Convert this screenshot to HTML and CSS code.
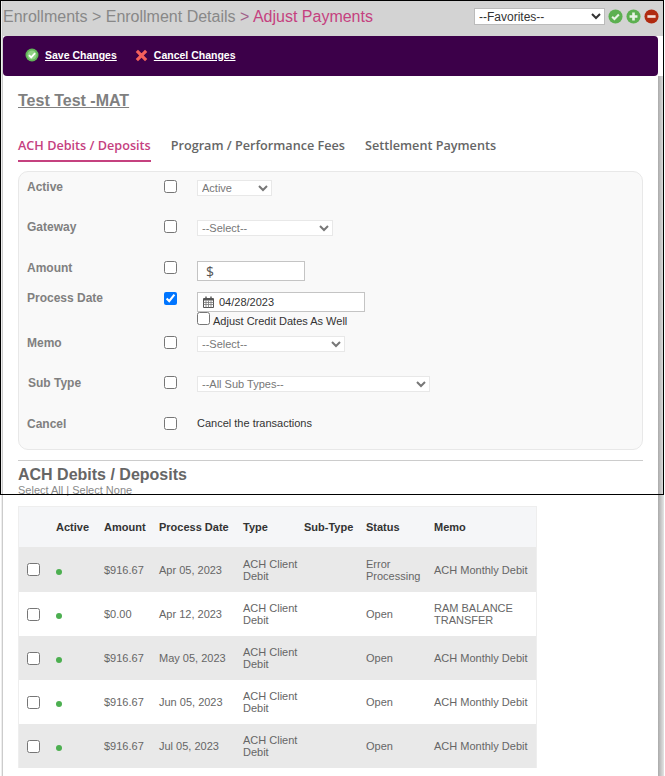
FILE: index.html
```html
<!DOCTYPE html>
<html lang="en">
<head>
<meta charset="utf-8">
<title>Adjust Payments</title>
<link rel="stylesheet" href="styles.css">
</head>
<body>
<div class="page">
  <header class="topbar">
    <div class="crumbs">Enrollments &gt; Enrollment Details <span class="crumb-current"><span class="sep">&gt;</span> Adjust Payments</span></div>
    <div class="favorites">
      <select class="fav-select"><option>--Favorites--</option></select>
      <svg class="fav-icon" viewBox="0 0 16 16"><circle cx="8" cy="8" r="7.5" fill="#5cb050"/><path d="M4.4 8.2l2.5 2.5 4.7-4.9" fill="none" stroke="#e8f3e4" stroke-width="2.2"/></svg>
      <svg class="fav-icon" viewBox="0 0 16 16"><circle cx="8" cy="8" r="7.5" fill="#5cb050"/><path d="M8 3.8v8.4M3.8 8h8.4" fill="none" stroke="#e8f3e4" stroke-width="2.8"/></svg>
      <svg class="fav-icon" viewBox="0 0 16 16"><circle cx="8" cy="8" r="7.5" fill="#b02a10"/><path d="M3.6 8h8.8" fill="none" stroke="#f3e0da" stroke-width="2.8"/></svg>
    </div>
  </header>

  <div class="shell">
    <nav class="toolbar">
      <a class="tool-link" href="#">
        <svg class="tool-icon" viewBox="0 0 14 14"><circle cx="7" cy="7" r="6.5" fill="#62b558"/><circle cx="7" cy="7" r="4.6" fill="#8fd084"/><path d="M4 7.2l2.2 2.2 3.9-4.2" fill="none" stroke="#fff" stroke-width="1.8"/></svg>
        Save Changes
      </a>
      <a class="tool-link tool-cancel" href="#">
        <svg class="tool-icon" viewBox="0 0 14 14"><path d="M2 2l10 10M12 2L2 12" fill="none" stroke="#f4605c" stroke-width="3.4"/></svg>
        Cancel Changes
      </a>
    </nav>

    <main class="content">
      <h1 class="client"><a href="#">Test Test -MAT</a></h1>

      <div class="tabs">
        <a class="tab tab-active" href="#">ACH Debits / Deposits</a>
        <a class="tab" href="#">Program / Performance Fees</a>
        <a class="tab" href="#">Settlement Payments</a>
      </div>

      <form class="panel">
        <div class="row row-active">
          <label class="row-label">Active</label>
          <input type="checkbox">
          <select class="ctl w-active"><option>Active</option></select>
        </div>
        <div class="row row-gateway">
          <label class="row-label">Gateway</label>
          <input type="checkbox">
          <select class="ctl w-gateway"><option>--Select--</option></select>
        </div>
        <div class="row row-amount">
          <label class="row-label">Amount</label>
          <input type="checkbox">
          <div class="field w-amount"><span class="dollar">$</span></div>
        </div>
        <div class="row row-date">
          <label class="row-label label-date">Process Date</label>
          <input type="checkbox" checked>
          <div class="date-stack">
            <div class="field w-date">
              <svg class="cal" viewBox="0 0 11 12"><path d="M0.5 2.5h10v9h-10z" fill="#fff" stroke="#555"/><path d="M0.5 3h10v1.5h-10z" fill="#555"/><path d="M3 0.5v2M8 0.5v2" stroke="#555" stroke-width="1.4"/><path d="M0.5 6.5h10M0.5 8.5h10M3 4.5v7M5.5 4.5v7M8 4.5v7" stroke="#777" stroke-width="0.8"/></svg>
              <span class="date-value">04/28/2023</span>
            </div>
            <label class="adjust"><input type="checkbox"><span class="adjust-text">Adjust Credit Dates As Well</span></label>
          </div>
        </div>
        <div class="row row-memo">
          <label class="row-label">Memo</label>
          <input type="checkbox">
          <select class="ctl w-memo"><option>--Select--</option></select>
        </div>
        <div class="row row-sub">
          <label class="row-label label-sub">Sub Type</label>
          <input type="checkbox">
          <select class="ctl w-sub"><option>--All Sub Types--</option></select>
        </div>
        <div class="row row-cancel">
          <label class="row-label">Cancel</label>
          <input type="checkbox">
          <span class="cancel-text">Cancel the transactions</span>
        </div>
      </form>

      <hr class="rule">
      <h2 class="section-title">ACH Debits / Deposits</h2>
      <div class="select-links">Select All | Select None</div>

      <table class="grid">
        <colgroup>
          <col class="c-check"><col class="c-active"><col class="c-amount"><col class="c-date"><col class="c-type"><col class="c-sub"><col class="c-status"><col class="c-memo">
        </colgroup>
        <thead>
          <tr><th></th><th>Active</th><th>Amount</th><th>Process Date</th><th>Type</th><th>Sub-Type</th><th>Status</th><th>Memo</th></tr>
        </thead>
        <tbody>
          <tr><td><input type="checkbox"></td><td><span class="dot"></span></td><td>$916.67</td><td>Apr 05, 2023</td><td>ACH Client Debit</td><td></td><td>Error Processing</td><td>ACH Monthly Debit</td></tr>
          <tr><td><input type="checkbox"></td><td><span class="dot"></span></td><td>$0.00</td><td>Apr 12, 2023</td><td>ACH Client Debit</td><td></td><td>Open</td><td>RAM BALANCE TRANSFER</td></tr>
          <tr><td><input type="checkbox"></td><td><span class="dot"></span></td><td>$916.67</td><td>May 05, 2023</td><td>ACH Client Debit</td><td></td><td>Open</td><td>ACH Monthly Debit</td></tr>
          <tr><td><input type="checkbox"></td><td><span class="dot"></span></td><td>$916.67</td><td>Jun 05, 2023</td><td>ACH Client Debit</td><td></td><td>Open</td><td>ACH Monthly Debit</td></tr>
          <tr><td><input type="checkbox"></td><td><span class="dot"></span></td><td>$916.67</td><td>Jul 05, 2023</td><td>ACH Client Debit</td><td></td><td>Open</td><td>ACH Monthly Debit</td></tr>
        </tbody>
      </table>
    </main>
  </div>

  <div class="rail rail-left"></div>
  <div class="rail rail-right"></div>
  <div class="frame"></div>
</div>
</body>
</html>
```
FILE: styles.css
```css
* { box-sizing: border-box; }
html, body { margin: 0; padding: 0; background: #fff; }
body { font-family: "Liberation Sans", Arial, sans-serif; color: #666; }

.page { position: relative; width: 665px; height: 776px; overflow: hidden; }

/* top bar */
.topbar {
  display: flex; align-items: center; justify-content: space-between;
  height: 36px; margin-right: 1px; padding: 0 5px 3px 3px; background: #d3d3d3;
}
.crumbs { font-size: 16px; color: #888; white-space: nowrap; }
.crumb-current { color: #c5417f; }
.sep { color: #a0608a; }
.favorites { display: flex; align-items: center; gap: 3px; }
.fav-select {
  width: 131px; height: 17px; padding: 0;
  font: 12px "Liberation Sans", Arial, sans-serif; color: #333;
  background: #fff; border: 1px solid #bbb; border-radius: 0;
}
.fav-icon { width: 15px; height: 15px; }

/* shell */
.shell { padding: 0 7px 0 3px; }
.toolbar {
  display: flex; align-items: center; gap: 18px;
  height: 40px; padding: 0 0 2px 22px; background: #3c0049; border-radius: 4px;
}
.tool-link {
  display: flex; align-items: center; gap: 6px;
  font-size: 10.5px; font-weight: bold; color: #fff; text-decoration: underline;
}
.tool-icon { width: 14px; height: 14px; }
.tool-cancel .tool-icon { width: 13px; height: 13px; }
.content { padding: 0 15px 0 15px; }

.client { margin: 0; height: 52px; padding-top: 15px; font-size: 16px; line-height: 20px; font-weight: bold; }
.client a { color: #808080; }

.tabs { display: flex; gap: 20px; height: 43px; padding-top: 9px; }
.tab {
  height: 25px; font: 600 12.65px/17px "Open Sans", sans-serif; color: #666; text-decoration: none;
}
.tab-active { color: #c5417f; border-bottom: 2px solid #c5417f; }

/* filter panel */
.panel {
  height: 279px;
  background: #f9f9f9; border: 1px solid #e8e8e8; border-radius: 10px;
}
.row {
  display: grid; grid-template-columns: 145px 33px 1fr; align-items: start;
  font-size: 12px; padding-top: 8px;
}
.row input[type="checkbox"] { margin: 0; width: 13px; height: 13px; }
.row-label { padding-left: 8px; font-weight: bold; color: #808080; line-height: 14px; }
.label-sub { padding-left: 9px; }
.label-date { margin-top: -1px; }
.row-active { height: 40px; }
.row-gateway { height: 41px; }
.row-amount { height: 30px; }
.row-date { height: 45px; padding-top: 9px; }
.row-memo { height: 40px; }
.row-sub { height: 41px; }
.row-cancel { height: 30px; }
.ctl {
  display: block; height: 16px; padding: 0;
  font: 11px "Liberation Sans", Arial, sans-serif; color: #777;
  background: #fff; border: 1px solid #e8e8e8; border-radius: 0;
}
.w-active { width: 75px; }
.w-gateway { width: 136px; }
.w-memo { width: 148px; }
.w-sub { width: 233px; }
.field {
  display: flex; align-items: center; height: 20px;
  background: #fff; border: 1px solid #c4c4c4;
}
.w-amount { width: 108px; padding-left: 8px; }
.dollar { font: 14px "Open Sans", sans-serif; color: #555; }
.w-date { width: 168px; padding-left: 5px; }
.cal { width: 11px; height: 12px; margin-right: 5px; }
.date-value { font-size: 11px; color: #333; }
.date-stack { display: flex; flex-direction: column; }
.adjust { display: flex; align-items: flex-start; gap: 3px; font-size: 11px; color: #333; line-height: 13px; }
.adjust-text { padding-top: 3px; }
.cancel-text { font-size: 11px; color: #333; line-height: 13px; }

.rule { height: 1px; margin: 10px 0 0; border: 0; background: #ccc; }
.section-title { margin: 5px 0 0; font-size: 16px; line-height: 18px; font-weight: bold; color: #666; }
.select-links { font-size: 11px; line-height: 12px; color: #888; }

/* table */
.grid {
  table-layout: fixed; width: 519px; margin-top: 10px;
  border-collapse: separate; border-spacing: 0; border: 1px solid #eee; border-bottom: 0; font-size: 11px; color: #666;
}
.c-check { width: 37px; }
.c-active { width: 48px; }
.c-amount { width: 55px; }
.c-date { width: 84px; }
.c-type { width: 61px; }
.c-sub { width: 62px; }
.c-status { width: 68px; }
.c-memo { width: 102px; }
.grid thead tr { height: 40px; background: #f5f6f8; }
.grid th { padding: 0; text-align: left; font-weight: bold; color: #333; }
.grid tbody tr { height: 44px; }
.grid tbody tr:first-child { height: 45px; }
.grid tbody tr:nth-child(odd) { background: #e9e9e9; }
.grid td { padding: 0; line-height: 12px; vertical-align: middle; }
.grid td:first-child { padding-left: 8px; }
.grid input[type="checkbox"] { display: block; margin: 0; width: 13px; height: 13px; }
.dot { display: block; width: 6px; height: 6px; margin-top: 4px; border-radius: 50%; background: #4caf50; }

/* screenshot overlays */
.rail { position: absolute; top: 0; bottom: 0; pointer-events: none; }
.rail-left { left: 1px; width: 2px; background: linear-gradient(90deg, #fff, #bbb); }
.rail-right { left: 658px; width: 6px; top: 76px; background: linear-gradient(90deg, #aaa, #e4e4e4); }
.frame { position: absolute; left: 0; top: 0; width: 664px; height: 495px; border: 1px solid #000; pointer-events: none; }
```
